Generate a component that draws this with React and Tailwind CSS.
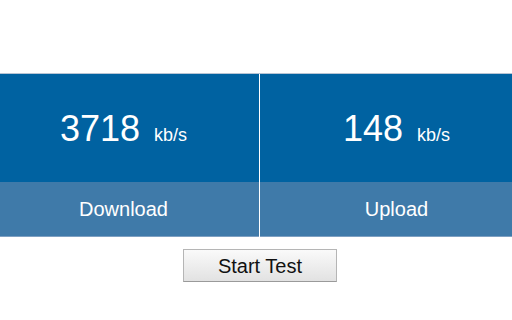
export default function App() {
  return (
    <div className="w-[512px] h-[320px] bg-white overflow-hidden font-['Liberation_Sans',Arial,sans-serif]">
      {/* RESULTS */}
      <div className="mt-[73px] border-t border-[#b7c4d4] flex">
        <Column value="3718" label="Download" className="w-[259px]" pad="pr-[12px]" />
        <div className="w-px bg-white" />
        <Column value="148" label="Upload" className="flex-1" pad="pl-[21px]" />
      </div>

      {/* ACTION */}
      <div className="flex justify-center mt-[12px] pl-[8px]">
        <button className="w-[154px] h-[33px] border border-[#b5b5b5] border-b-[#9a9a9a] bg-gradient-to-b from-[#fafafa] to-[#e2e2e2] text-[20px] text-[#111] leading-none">
          Start Test
        </button>
      </div>
    </div>
  );
}

function Column({ value, label, className, pad }) {
  return (
    <div className={className + " flex flex-col"}>
      <div className={pad + " h-[108px] bg-[#0062a1] flex items-baseline justify-center pt-[37px] text-white"}>
        <span className="text-[36px] leading-none">{value}</span>
        <span className="text-[18px] leading-none ml-[14px]">kb/s</span>
      </div>
      <div className={pad + " h-[55px] bg-[#3f7aa9] border-b border-[#7ea0c2] flex items-center justify-center text-white text-[20px]"}>
        {label}
      </div>
    </div>
  );
}
